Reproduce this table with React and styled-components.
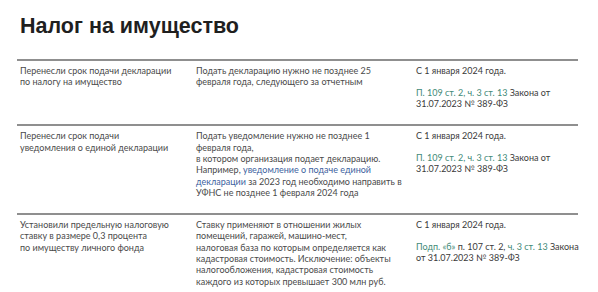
import React from 'react';
import styled, { createGlobalStyle } from 'styled-components';

const Global = createGlobalStyle`
  body {
    margin: 0;
    background: #fff;
    font-family: Lato, 'Liberation Sans', sans-serif;
  }
`

const Page = styled.div`
  padding: 0 20px 0 17px;
`

const Title = styled.h1`
  margin: 13px 0 20px;
  padding-left: 3px;
  font-family: 'Liberation Sans', Arial, sans-serif;
  font-weight: 700;
  font-size: 21.5px;
  line-height: 26px;
  color: #1f1f1f;
`

const Row = styled.div`
  display: grid;
  grid-template-columns: 176px 220px 1fr;
  border-top: 2px solid #8f8f8f;
  padding: 4px 0 15px;
`

const Cell = styled.div`
  padding: 0 4px 0 3px;
  font-size: 9px;
  line-height: 11.3px;
  color: ${p => (p.$dark ? '#3a3a3a' : '#4a4a4a')};
  white-space: ${p => (p.$dark ? 'nowrap' : 'normal')};
`

const Para = styled.p`
  margin: ${p => (p.$gap ? '10.5px' : '0')} 0 0;
`

const Link = styled.span`
  color: ${p => (p.$blue ? '#3d5f9e' : '#3f8a78')};
`

const App = () => {
  return (
    <Page>
      <Global />
      <Title>Налог на имущество</Title>

      <Row>
        <Cell>Перенесли срок подачи декларации<br />по налогу на имущество</Cell>
        <Cell>Подать декларацию нужно не позднее 25<br />февраля года, следующего за отчетным</Cell>
        <Cell $dark>
          <Para>С 1 января 2024 года.</Para>
          <Para $gap>
            <Link>П. 109 ст. 2, ч. 3 ст. 13</Link> Закона от<br />31.07.2023 № 389-ФЗ
          </Para>
        </Cell>
      </Row>

      <Row>
        <Cell>Перенесли срок подачи<br />уведомления о единой декларации</Cell>
        <Cell>
          <Para>Подать уведомление нужно не позднее 1<br />февраля года,</Para>
          <Para>в котором организация подает декларацию.</Para>
          <Para>
            Например, <Link $blue>уведомление о подаче единой<br />декларации</Link> за 2023 год необходимо направить в<br />УФНС не позднее 1 февраля 2024 года
          </Para>
        </Cell>
        <Cell $dark>
          <Para>С 1 января 2024 года.</Para>
          <Para $gap>
            <Link>П. 109 ст. 2, ч. 3 ст. 13</Link> Закона от<br />31.07.2023 № 389-ФЗ
          </Para>
        </Cell>
      </Row>

      <Row>
        <Cell>Установили предельную налоговую<br />ставку в размере 0,3 процента<br />по имуществу личного фонда</Cell>
        <Cell>
          Ставку применяют в отношении жилых<br />помещений, гаражей, машино-мест,<br />налоговая база по которым определяется как<br />кадастровая стоимость. Исключение: объекты<br />налогообложения, кадастровая стоимость<br />каждого из которых превышает 300 млн руб.
        </Cell>
        <Cell $dark>
          <Para>С 1 января 2024 года.</Para>
          <Para $gap>
            <Link>Подп. «б»</Link> п. 107 ст. 2, <Link>ч. 3 ст. 13</Link> Закона<br />от 31.07.2023 № 389-ФЗ
          </Para>
        </Cell>
      </Row>
    </Page>
  )
}

export default App
